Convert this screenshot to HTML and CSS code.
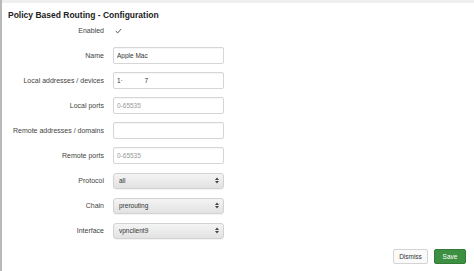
FILE: index.html
```html
<!DOCTYPE html>
<html>
<head>
<meta charset="utf-8">
<link rel="stylesheet" href="styles.css">
</head>
<body>
<div class="topbar"></div>
<div class="modal">
  <h1 class="title">Policy Based Routing - Configuration</h1>
  <div class="form">
    <label class="lbl">Enabled</label>
    <div class="field check"><svg width="7" height="6" viewBox="0 0 7 6"><path d="M0.8 3.2 L2.7 4.9 L6.2 1" fill="none" stroke="#555" stroke-width="1"/></svg></div>

    <label class="lbl">Name</label>
    <div class="field"><input class="inp" type="text" value="Apple Mac"></div>

    <label class="lbl">Local addresses / devices</label>
    <div class="field"><input class="inp" type="text" value="1·            7"></div>

    <label class="lbl">Local ports</label>
    <div class="field"><input class="inp" type="text" placeholder="0-65535"></div>

    <label class="lbl">Remote addresses / domains</label>
    <div class="field"><input class="inp" type="text"></div>

    <label class="lbl">Remote ports</label>
    <div class="field"><input class="inp" type="text" placeholder="0-65535"></div>

    <label class="lbl">Protocol</label>
    <div class="field"><div class="sel"><span>all</span><svg class="arr" width="4" height="7" viewBox="0 0 4 7"><path d="M0 3 L2 0.5 L4 3 Z M0 4 L2 6.5 L4 4 Z" fill="#444"/></svg></div></div>

    <label class="lbl">Chain</label>
    <div class="field"><div class="sel"><span>prerouting</span><svg class="arr" width="4" height="7" viewBox="0 0 4 7"><path d="M0 3 L2 0.5 L4 3 Z M0 4 L2 6.5 L4 4 Z" fill="#444"/></svg></div></div>

    <label class="lbl">Interface</label>
    <div class="field"><div class="sel"><span>vpnclient9</span><svg class="arr" width="4" height="7" viewBox="0 0 4 7"><path d="M0 3 L2 0.5 L4 3 Z M0 4 L2 6.5 L4 4 Z" fill="#444"/></svg></div></div>
  </div>
  <div class="actions">
    <button class="btn dismiss">Dismiss</button>
    <button class="btn save">Save</button>
  </div>
</div>
</body>
</html>
```
FILE: styles.css
```css
html, body {
  margin: 0;
  padding: 0;
  background: #fff;
  font-family: "Liberation Sans", Arial, sans-serif;
  color: #333;
}
body {
  width: 474px;
  height: 271px;
  overflow: hidden;
  border-left: 2px solid #b8b8b8;
  box-sizing: border-box;
}
.topbar {
  height: 3px;
  background: #efefef;
}
.modal {
  padding: 0 8px 0 6px;
}
.title {
  margin: 7px 0 0 0;
  font-size: 8.5px;
  line-height: 10px;
  font-weight: bold;
  color: #222;
}
.form {
  display: grid;
  grid-template-columns: 96px 111px;
  column-gap: 9px;
  row-gap: 8px;
  grid-auto-rows: 17px;
  margin-top: 2px;
}
.lbl {
  font-size: 7px;
  text-align: right;
  align-self: center;
  color: #444;
  white-space: nowrap;
}
.field {
  display: flex;
  align-items: center;
}
.check {
  padding-left: 2px;
}
.inp {
  width: 111px;
  height: 17px;
  box-sizing: border-box;
  border: 1px solid #d6d6d6;
  border-radius: 2px;
  padding: 0 3px;
  font-family: "Liberation Sans", Arial, sans-serif;
  font-size: 6.5px;
  color: #333;
  margin: 0;
  outline: none;
  box-shadow: inset 0 1px 1px rgba(0,0,0,0.04);
}
.inp::placeholder {
  color: #999;
}
.sel {
  width: 111px;
  height: 16px;
  box-sizing: border-box;
  border: 1px solid #d2d2d2;
  border-radius: 3px;
  background: linear-gradient(#f4f4f4, #e2e2e2);
  display: flex;
  align-items: center;
  justify-content: space-between;
  padding: 0 4px 0 5px;
  font-size: 6.5px;
  color: #333;
  box-shadow: 0 1px 1px rgba(0,0,0,0.05);
}
.arr {
  display: block;
}
.actions {
  display: flex;
  justify-content: flex-end;
  gap: 6px;
  margin-top: 10px;
}
.btn {
  height: 15px;
  box-sizing: border-box;
  font-family: "Liberation Sans", Arial, sans-serif;
  font-size: 6.5px;
  border-radius: 2px;
  padding: 0;
  margin: 0;
  line-height: 13px;
}
.dismiss {
  background: #fafafa;
  border: 1px solid #d4d4d4;
  color: #333;
  width: 35px;
}
.save {
  background: #3d8f42;
  border: 1px solid #347b38;
  color: #fff;
  width: 32px;
}
```
